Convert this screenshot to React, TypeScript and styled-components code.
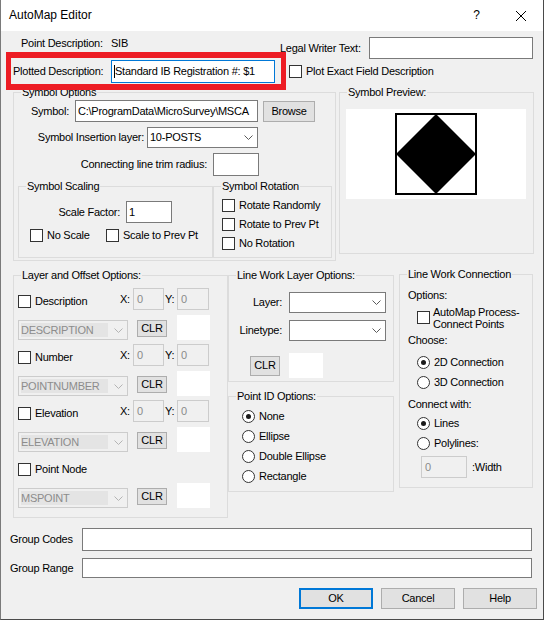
import React from 'react';
import styled, { createGlobalStyle } from 'styled-components';

const GlobalStyle = createGlobalStyle`
  body {
    margin: 0;
    background: #ffffff;
  }
  * {
    box-sizing: border-box;
  }
`;

const Window = styled.div`
  position: relative;
  width: 544px;
  height: 620px;
  display: flex;
  flex-direction: column;
  border-left: 1px solid #7a7a7a;
  border-right: 1px solid #4a4a4a;
  border-bottom: 1px solid #4a4a4a;
  font-family: 'Liberation Sans', Arial, sans-serif;
  font-size: 11px;
  line-height: 13px;
  letter-spacing: -0.25px;
  color: #000;
`;

const TitleBar = styled.div`
  height: 31px;
  flex: none;
  display: flex;
  align-items: center;
  padding-left: 8px;
  background: #ffffff;
  font-size: 12px;
  letter-spacing: 0;
`;

const TitleText = styled.span`
  flex: 1;
`;

const HelpGlyph = styled.span`
  margin-right: 36px;
  font-size: 12px;
`;

const CloseIcon = styled.svg`
  margin-right: 17px;
  flex: none;
`;

const Client = styled.div`
  flex: 1;
  display: flex;
  flex-direction: column;
  background: #f0f0f0;
`;

const Highlight = styled.div`
  position: absolute;
  left: 5px;
  top: 52px;
  width: 280px;
  height: 38px;
  border-style: solid;
  border-color: #ed1c24;
  border-width: 6px 5px;
  pointer-events: none;
`;

const Row = styled.div<{ $mt?: number; $h?: number; $pl?: number; $align?: string }>`
  display: flex;
  flex: none;
  align-items: ${p => p.$align ?? 'center'};
  margin-top: ${p => p.$mt ?? 0}px;
  height: ${p => (p.$h ? `${p.$h}px` : 'auto')};
  padding-left: ${p => p.$pl ?? 0}px;
`;

const Text = styled.span<{ $w?: number; $ml?: number; $top?: boolean }>`
  flex: none;
  white-space: nowrap;
  width: ${p => (p.$w ? `${p.$w}px` : 'auto')};
  margin-left: ${p => p.$ml ?? 0}px;
  align-self: ${p => (p.$top ? 'flex-start' : 'auto')};
`;

const FieldLabel = styled.span<{ $w: number; $gap?: number }>`
  flex: none;
  width: ${p => p.$w}px;
  padding-right: ${p => p.$gap ?? 6}px;
  text-align: right;
  white-space: nowrap;
`;

const Caption = styled.div<{ $mt: number }>`
  margin-top: ${p => p.$mt}px;
  padding-left: 8px;
  white-space: nowrap;
`;

const TextBox = styled.div<{ $w: number; $h: number; $focus?: boolean; $disabled?: boolean; $ml?: number }>`
  flex: none;
  width: ${p => p.$w}px;
  height: ${p => p.$h}px;
  margin-left: ${p => p.$ml ?? 0}px;
  display: flex;
  align-items: center;
  padding-left: ${p => (p.$disabled ? 3 : 2)}px;
  overflow: hidden;
  white-space: nowrap;
  border: 1px solid ${p => (p.$focus ? '#0078d7' : p.$disabled ? '#cccccc' : '#7a7a7a')};
  background: ${p => (p.$disabled ? '#f0f0f0' : '#ffffff')};
  color: ${p => (p.$disabled ? '#8a8a8a' : '#000')};
`;

const Caret = styled.span`
  width: 1px;
  height: 13px;
  background: #000;
  flex: none;
`;

const Combo = styled.div<{ $w: number; $h: number; $disabled?: boolean; $mt?: number }>`
  flex: none;
  width: ${p => p.$w}px;
  height: ${p => p.$h}px;
  margin-top: ${p => p.$mt ?? 0}px;
  display: flex;
  align-items: center;
  padding: ${p => (p.$disabled ? '2px 4px 2px 2px' : '0 4px 0 2px')};
  border: 1px solid ${p => (p.$disabled ? '#cccccc' : '#7a7a7a')};
  background: ${p => (p.$disabled ? '#f0f0f0' : '#ffffff')};
  color: ${p => (p.$disabled ? '#8c8c8c' : '#000')};
`;

const ComboText = styled.span<{ $disabled?: boolean }>`
  flex: 1;
  align-self: stretch;
  display: flex;
  align-items: center;
  margin-right: 6px;
  overflow: hidden;
  white-space: nowrap;
  background: ${p => (p.$disabled ? '#e4e4e4' : 'transparent')};
`;

const Button = styled.div<{ $w: number; $h: number; $ml?: number; $mt?: number; $default?: boolean }>`
  flex: none;
  width: ${p => p.$w}px;
  height: ${p => p.$h}px;
  margin-left: ${p => p.$ml ?? 0}px;
  margin-top: ${p => p.$mt ?? 0}px;
  display: flex;
  align-items: center;
  justify-content: center;
  background: #e1e1e1;
  border: ${p => (p.$default ? '2px solid #0078d7' : '1px solid #adadad')};
`;

const Swatch = styled.div<{ $w: number; $h: number; $ml: number }>`
  flex: none;
  width: ${p => p.$w}px;
  height: ${p => p.$h}px;
  margin-left: ${p => p.$ml}px;
  background: #ffffff;
`;

const CheckBox = styled.span<{ $mt?: number }>`
  flex: none;
  width: 13px;
  height: 13px;
  margin-top: ${p => p.$mt ?? 0}px;
  border: 1px solid #333333;
  background: #ffffff;
`;

const CheckItem = styled.label<{ $w?: number; $top?: number }>`
  flex: none;
  display: flex;
  align-items: center;
  gap: 4px;
  height: 13px;
  white-space: nowrap;
  width: ${p => (p.$w ? `${p.$w}px` : 'auto')};
  align-self: ${p => (p.$top !== undefined ? 'flex-start' : 'auto')};
  margin-top: ${p => p.$top ?? 0}px;
`;

const CheckList = styled.div<{ $mt: number; $pl: number }>`
  display: flex;
  flex-direction: column;
  gap: 6px;
  margin-top: ${p => p.$mt}px;
  padding-left: ${p => p.$pl}px;
`;

const RadioList = styled.div<{ $mt: number; $pl: number }>`
  display: flex;
  flex-direction: column;
  margin-top: ${p => p.$mt}px;
  padding-left: ${p => p.$pl}px;
`;

const RadioItem = styled.label`
  display: flex;
  align-items: center;
  gap: 4px;
  height: 20px;
  white-space: nowrap;
`;

const RadioDot = styled.span<{ $on?: boolean }>`
  flex: none;
  width: 13px;
  height: 13px;
  border-radius: 50%;
  border: 1px solid #333333;
  background: #ffffff;
  display: flex;
  align-items: center;
  justify-content: center;
  &::after {
    content: '';
    width: 5px;
    height: 5px;
    border-radius: 50%;
    background: #1a1a1a;
    display: ${p => (p.$on ? 'block' : 'none')};
  }
`;

const Group = styled.div<{ $w: number; $h: number; $mt?: number; $ml?: number }>`
  position: relative;
  flex: none;
  display: flex;
  flex-direction: column;
  width: ${p => p.$w}px;
  height: ${p => p.$h}px;
  margin-top: ${p => p.$mt ?? 0}px;
  margin-left: ${p => p.$ml ?? 0}px;
  border: 1px solid #dcdcdc;
`;

const GroupLabel = styled.span`
  position: absolute;
  top: -7px;
  left: 7px;
  padding: 0 1px;
  background: #f0f0f0;
  white-space: nowrap;
`;

const PreviewArea = styled.div`
  width: 180px;
  height: 90px;
  margin: 16px 0 0 6px;
  display: flex;
  align-items: center;
  justify-content: center;
  background: #ffffff;
`;

const OffsetList = styled.div`
  display: flex;
  flex-direction: column;
  gap: 4px;
  padding: 12px 0 0 4px;
`;

const Column = styled.div`
  display: flex;
  flex-direction: column;
  flex: none;
`;

const TwoLine = styled.span`
  margin-left: 3px;
  line-height: 12px;
`;

const ButtonRow = styled.div`
  display: flex;
  justify-content: flex-end;
  gap: 8px;
  margin-top: 10px;
  padding-right: 6px;
`;

const Chevron: React.FC<{ disabled?: boolean }> = ({ disabled }) => (
  <svg width="9" height="5" viewBox="0 0 9 5" style={{ flex: 'none' }}>
    <path d="M0.5 0.5 L4.5 4.5 L8.5 0.5" fill="none" stroke={disabled ? '#b4b4b4' : '#5a5a5a'} strokeWidth="1" />
  </svg>
);

const Select: React.FC<{ w: number; h: number; value?: string; disabled?: boolean; mt?: number }> = ({ w, h, value, disabled, mt }) => (
  <Combo $w={w} $h={h} $disabled={disabled} $mt={mt}>
    <ComboText $disabled={disabled}>{value}</ComboText>
    <Chevron disabled={disabled} />
  </Combo>
);

const offsetRows = [
  { label: 'Description', layer: 'DESCRIPTION', xy: true },
  { label: 'Number', layer: 'POINTNUMBER', xy: true },
  { label: 'Elevation', layer: 'ELEVATION', xy: true },
  { label: 'Point Node', layer: 'MSPOINT', xy: false },
];

const App: React.FC = () => {
  return (
    <>
      <GlobalStyle />
      <Window>
        <TitleBar>
          <TitleText>AutoMap Editor</TitleText>
          <HelpGlyph>?</HelpGlyph>
          <CloseIcon width="10" height="10" viewBox="0 0 10 10">
            <path d="M0 0 L10 10 M10 0 L0 10" stroke="#000" strokeWidth="1" />
          </CloseIcon>
        </TitleBar>
        <Client>
          <Row $mt={6} $h={22} $pl={20}>
            <Text $w={90} $top>Point Description:</Text>
            <Text $w={169} $top>SIB</Text>
            <Text $w={89}>Legal Writer Text:</Text>
            <TextBox $w={164} $h={22} />
          </Row>
          <Row $mt={1} $h={23} $pl={12}>
            <Text $w={98}>Plotted Description:</Text>
            <TextBox $w={164} $h={23} $focus>
              <Caret />
              Standard IB Registration #: $1
            </TextBox>
            <CheckItem style={{ marginLeft: 14 }}>
              <CheckBox />
              Plot Exact Field Description
            </CheckItem>
          </Row>

          <Row $mt={9} $pl={12} $align="flex-start">
            <Group $w={323} $h={169}>
              <GroupLabel>Symbol Options</GroupLabel>
              <Row $mt={7} $h={22}>
                <FieldLabel $w={61}>Symbol:</FieldLabel>
                <TextBox $w={183} $h={22}>C:\ProgramData\MicroSurvey\MSCA</TextBox>
                <Button $w={52} $h={21} $ml={5}>Browse</Button>
              </Row>
              <Row $mt={5} $h={21}>
                <FieldLabel $w={133} $gap={3}>Symbol Insertion layer:</FieldLabel>
                <Select w={111} h={21} value="10-POSTS" />
              </Row>
              <Row $mt={5} $h={23}>
                <FieldLabel $w={199}>Connecting line trim radius:</FieldLabel>
                <TextBox $w={46} $h={23} />
              </Row>
              <Row $mt={10} $pl={4} $align="flex-start">
                <Group $w={195} $h={72}>
                  <GroupLabel>Symbol Scaling</GroupLabel>
                  <Row $mt={14} $h={22}>
                    <FieldLabel $w={107}>Scale Factor:</FieldLabel>
                    <TextBox $w={46} $h={22}>1</TextBox>
                  </Row>
                  <Row $mt={6} $h={13} $pl={11}>
                    <CheckItem $w={76}>
                      <CheckBox />
                      No Scale
                    </CheckItem>
                    <CheckItem>
                      <CheckBox />
                      Scale to Prev Pt
                    </CheckItem>
                  </Row>
                </Group>
                <Group $w={119} $h={72}>
                  <GroupLabel>Symbol Rotation</GroupLabel>
                  <CheckList $mt={12} $pl={8}>
                    <CheckItem>
                      <CheckBox />
                      Rotate Randomly
                    </CheckItem>
                    <CheckItem>
                      <CheckBox />
                      Rotate to Prev Pt
                    </CheckItem>
                    <CheckItem>
                      <CheckBox />
                      No Rotation
                    </CheckItem>
                  </CheckList>
                </Group>
              </Row>
            </Group>
            <Group $w={195} $h={162} $ml={3}>
              <GroupLabel>Symbol Preview:</GroupLabel>
              <PreviewArea>
                <svg width="82" height="82" viewBox="0 0 82 82">
                  <rect x="1" y="1" width="80" height="80" fill="#fff" stroke="#000" strokeWidth="2" />
                  <polygon points="41,1 81,41 41,81 1,41" fill="#000" />
                </svg>
              </PreviewArea>
            </Group>
          </Row>

          <Row $mt={14} $pl={12} $align="flex-start">
            <Group $w={215} $h={243}>
              <GroupLabel>Layer and Offset Options:</GroupLabel>
              <OffsetList>
                {offsetRows.map(r => (
                  <div key={r.label}>
                    <Row $h={22}>
                      <CheckItem $w={102} $top={7}>
                        <CheckBox />
                        {r.label}
                      </CheckItem>
                      {r.xy && (
                        <>
                          <Text $w={13}>X:</Text>
                          <TextBox $w={31} $h={22} $disabled>0</TextBox>
                          <Text $w={12} $ml={1}>Y:</Text>
                          <TextBox $w={32} $h={22} $disabled>0</TextBox>
                        </>
                      )}
                    </Row>
                    <Row $mt={5} $h={25} $align="flex-start">
                      <Select w={110} h={20} mt={5} value={r.layer} disabled />
                      <Button $w={30} $h={17} $ml={9} $mt={5}>CLR</Button>
                      <Swatch $w={33} $h={25} $ml={10} />
                    </Row>
                  </div>
                ))}
              </OffsetList>
            </Group>

            <Column>
              <Group $w={166} $h={107}>
                <GroupLabel>Line Work Layer Options:</GroupLabel>
                <Row $mt={16} $h={21}>
                  <FieldLabel $w={60} $gap={7}>Layer:</FieldLabel>
                  <Select w={97} h={21} />
                </Row>
                <Row $mt={7} $h={21}>
                  <FieldLabel $w={60} $gap={7}>Linetype:</FieldLabel>
                  <Select w={97} h={21} />
                </Row>
                <Row $mt={12} $h={25} $pl={21}>
                  <Button $w={30} $h={20}>CLR</Button>
                  <Swatch $w={34} $h={25} $ml={9} />
                </Row>
              </Group>
              <Group $w={166} $h={96} $mt={14}>
                <GroupLabel>Point ID Options:</GroupLabel>
                <RadioList $mt={9} $pl={13}>
                  <RadioItem>
                    <RadioDot $on />
                    None
                  </RadioItem>
                  <RadioItem>
                    <RadioDot />
                    Ellipse
                  </RadioItem>
                  <RadioItem>
                    <RadioDot />
                    Double Ellipse
                  </RadioItem>
                  <RadioItem>
                    <RadioDot />
                    Rectangle
                  </RadioItem>
                </RadioList>
              </Group>
            </Column>

            <Group $w={134} $h={214} $ml={5} $mt={-1}>
              <GroupLabel>Line Work Connection</GroupLabel>
              <Caption $mt={14}>Options:</Caption>
              <Row $mt={4} $pl={17} $align="flex-start">
                <CheckBox $mt={5} />
                <TwoLine>
                  AutoMap Process-
                  <br />
                  Connect Points
                </TwoLine>
              </Row>
              <Caption $mt={4}>Choose:</Caption>
              <RadioList $mt={5} $pl={17}>
                <RadioItem>
                  <RadioDot $on />
                  2D Connection
                </RadioItem>
                <RadioItem>
                  <RadioDot />
                  3D Connection
                </RadioItem>
              </RadioList>
              <Caption $mt={6}>Connect with:</Caption>
              <RadioList $mt={2} $pl={17}>
                <RadioItem>
                  <RadioDot $on />
                  Lines
                </RadioItem>
                <RadioItem>
                  <RadioDot />
                  Polylines:
                </RadioItem>
              </RadioList>
              <Row $mt={3} $h={22} $pl={21}>
                <TextBox $w={46} $h={22} $disabled>0</TextBox>
                <Text $ml={5}>:Width</Text>
              </Row>
            </Group>
          </Row>

          <Row $mt={10} $h={23} $pl={9}>
            <Text $w={72}>Group Codes</Text>
            <TextBox $w={450} $h={23} />
          </Row>
          <Row $mt={7} $h={20} $pl={9}>
            <Text $w={72}>Group Range</Text>
            <TextBox $w={450} $h={20} />
          </Row>
          <ButtonRow>
            <Button $w={74} $h={21} $default>OK</Button>
            <Button $w={74} $h={21}>Cancel</Button>
            <Button $w={74} $h={21}>Help</Button>
          </ButtonRow>
        </Client>
        <Highlight />
      </Window>
    </>
  );
};

export default App;
